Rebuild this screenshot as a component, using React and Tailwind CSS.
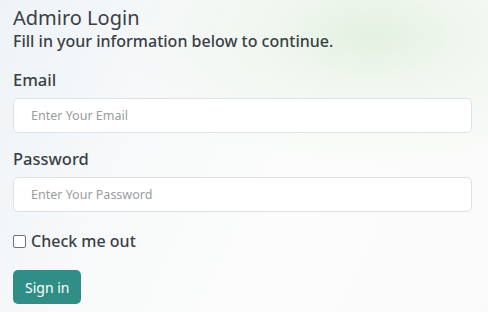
import React from 'react';

const App = () => {
    return (
        <div
            className="w-[488px] h-[312px] overflow-hidden pl-[13px] pr-[16px] pt-[5px] text-[#3a3f45] bg-[radial-gradient(ellipse_250px_130px_at_370px_35px,#e4f1e2_0%,rgba(236,245,234,0.6)_45%,rgba(255,255,255,0)_100%),linear-gradient(115deg,#eef3f7_0%,#f7f9fa_30%,#fbfcfb_60%,#f9faf9_100%)]"
            style={{ fontFamily: '"Noto Sans", sans-serif' }}
        >
            <h2 className="text-[20px] leading-[25px] font-normal">Admiro Login</h2>
            <p className="text-[16px] leading-[22px] font-medium">Fill in your information below to continue.</p>

            <form className="mt-[16px]">
                <div>
                    <label className="block text-[16.5px] leading-[24px] font-medium">Email</label>
                    <input
                        type="email"
                        placeholder="Enter Your Email"
                        className="mt-[6px] w-full h-[35px] bg-white border border-[#dee2e6] rounded-[5px] px-[17px] text-[12.5px] placeholder:text-[#999ca0] outline-none"
                    />
                </div>
                <div className="mt-[14px]">
                    <label className="block text-[16.5px] leading-[24px] font-medium">Password</label>
                    <input
                        type="password"
                        placeholder="Enter Your Password"
                        className="mt-[6px] w-full h-[35px] bg-white border border-[#dee2e6] rounded-[5px] px-[17px] text-[12.5px] placeholder:text-[#999ca0] outline-none"
                    />
                </div>
                <label className="mt-[17px] flex items-center gap-[5px] text-[16px] leading-[24px] font-medium">
                    <input type="checkbox" className="w-[13px] h-[13px] appearance-none border border-[#6c757d] rounded-[2px] bg-white" />
                    Check me out
                </label>
                <button
                    type="button"
                    className="mt-[17px] h-[34px] px-[12px] rounded-[5px] bg-[#308e87] text-white text-[14px] font-normal"
                >
                    Sign in
                </button>
            </form>
        </div>
    );
};

export default App;
